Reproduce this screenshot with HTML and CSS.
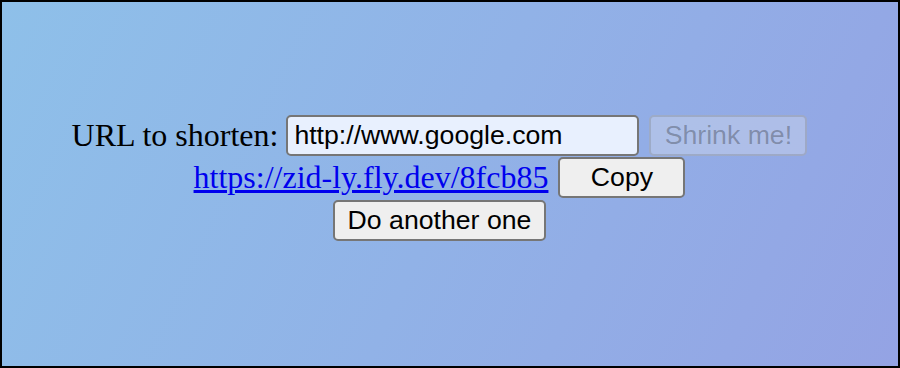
FILE: index.html
```html
<!DOCTYPE html>
<html>
<head>
<meta charset="utf-8">
<link rel="stylesheet" href="styles.css">
</head>
<body>
<div class="page">
  <div class="form">
    <div class="line">
      <label class="label" for="url">URL to shorten:</label>
      <input id="url" class="field" type="text" value="http://www.google.com">
      <button class="btn btn-disabled" disabled>Shrink me!</button>
    </div>
    <div class="line">
      <a class="short" href="#">https://zid-ly.fly.dev/8fcb85</a>
      <button class="btn btn-copy">Copy</button>
    </div>
    <div class="line">
      <button class="btn">Do another one</button>
    </div>
  </div>
</div>
</body>
</html>
```
FILE: styles.css
```css
html, body {
  margin: 0;
  padding: 0;
}
.page {
  width: 900px;
  height: 368px;
  box-sizing: border-box;
  border: 2px solid #000;
  background: linear-gradient(115deg, #8ec0e9 0%, #91b2e7 50%, #94a3e4 100%);
  font-family: "Liberation Serif", "Times New Roman", serif;
  font-size: 32px;
  color: #000;
  padding: 112px 21px 0 0;
}
.form {
  display: flex;
  flex-direction: column;
  align-items: center;
}
.line {
  height: 42.5px;
  display: flex;
  align-items: center;
  justify-content: center;
}
.label {
  margin-right: 8px;
}
.field {
  width: 353px;
  height: 41px;
  box-sizing: border-box;
  border: 2px solid #767676;
  border-radius: 5px;
  background: #e8f0fe;
  font-family: "Liberation Sans", Arial, sans-serif;
  font-size: 26.67px;
  color: #000;
  padding: 0 6px;
  margin: 0 10px 0 0;
  outline: none;
}
.btn {
  height: 41px;
  box-sizing: border-box;
  border: 2px solid #767676;
  border-radius: 5px;
  background: #efefef;
  font-family: "Liberation Sans", Arial, sans-serif;
  font-size: 26.67px;
  color: #000;
  padding: 0 13px;
  margin: 0;
}
.btn-disabled {
  width: 158px;
  background: rgba(239, 239, 239, 0.3);
  border-color: rgba(118, 118, 118, 0.3);
  color: rgba(16, 16, 16, 0.3);
}
.btn-copy {
  width: 127px;
}
.short {
  color: #0000ee;
  text-decoration: underline;
  margin-right: 10px;
}
```
